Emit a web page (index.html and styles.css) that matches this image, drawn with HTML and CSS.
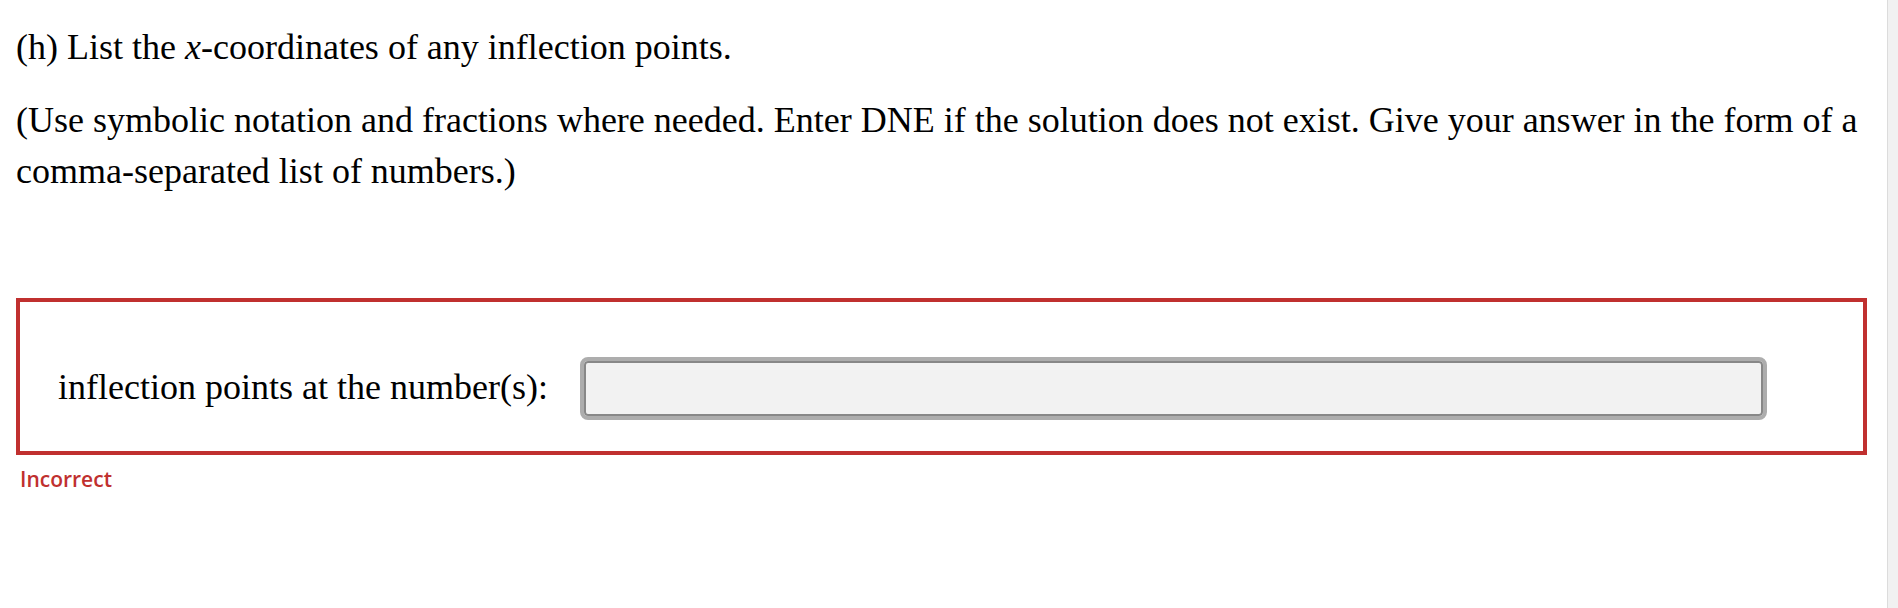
FILE: index.html
```html
<!DOCTYPE html>
<html lang="en">
<head>
<meta charset="utf-8">
<link rel="stylesheet" href="styles.css">
<title>Part (h)</title>
</head>
<body>
<div class="page">
  <div class="question">
    <p class="prompt">(h) List the <i class="var">x</i>-coordinates of any inflection points.</p>
    <p class="hint">(Use symbolic notation and fractions where needed. Enter DNE if the solution does not exist. Give your answer in the form of a comma-separated list of numbers.)</p>

    <div class="answer-box wrong">
      <label class="answer-label" for="ans-h">inflection points at the number(s):</label>
      <input class="answer-input" id="ans-h" type="text">
    </div>
    <div class="feedback">Incorrect</div>
  </div>
  <div class="scroll-track"></div>
</div>
</body>
</html>
```

FILE: styles.css
```css
body {
  margin: 0;
  padding: 0;
  background: #fff;
  color: #000;
  font-family: "Liberation Serif", "Times New Roman", serif;
  font-size: 36px;
}

.page {
  display: flex;
  min-height: 608px;
}

.question {
  flex: 1;
  padding: 22px 20px 0 16px;
}

.scroll-track {
  width: 10px;
  background: #f1f1f1;
  border-left: 1px solid #dcdcdc;
}

p {
  margin: 0 0 22px 0;
  line-height: 51px;
}

.var {
  font-style: italic;
}

.hint {
  margin-bottom: 101px;
}

.answer-box {
  display: flex;
  align-items: center;
  padding: 55px 96px 31px 38px;
  border: 4px solid #c0302f;
}

.answer-label {
  margin-right: 32px;
  margin-bottom: 3px;
  white-space: nowrap;
}

.answer-input {
  flex: 1;
  height: 63px;
  box-sizing: border-box;
  background: #f2f2f2;
  border: 4px solid #adadad;
  border-radius: 8px;
  box-shadow: inset 0 0 0 2px #888;
  outline: none;
}

.feedback {
  margin-top: 10px;
  padding-left: 4px;
  color: #c0302f;
  font-family: "Open Sans", sans-serif;
  font-weight: 600;
  font-size: 21px;
}
```
